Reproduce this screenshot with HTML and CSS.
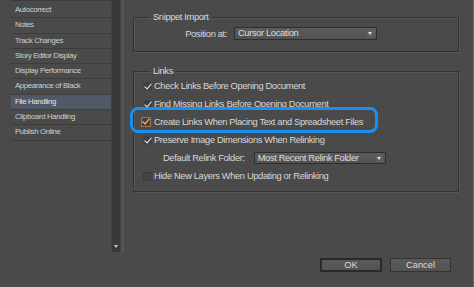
FILE: index.html
```html
<!DOCTYPE html>
<html lang="en">
<head>
  <meta charset="UTF-8">
  <meta name="viewport" content="width=device-width, initial-scale=1.0">
  <title>Preferences - File Handling</title>
  <link rel="stylesheet" href="styles.css">
</head>
<body>
  <div class="dialog">
    <div class="side">
      <ul class="cats">
        <li>Autocorrect</li>
        <li>Notes</li>
        <li>Track Changes</li>
        <li>Story Editor Display</li>
        <li>Display Performance</li>
        <li>Appearance of Black</li>
        <li class="active">File Handling</li>
        <li>Clipboard Handling</li>
        <li>Publish Online</li>
      </ul>
      <div class="scroll"><span class="scroll-arrow"></span></div>
    </div>

    <div class="main">
      <fieldset class="group snippet">
        <legend>Snippet Import</legend>
        <div class="field pos">
          <span class="lbl">Position at:</span>
          <div class="select sel-pos">Cursor Location<span class="arrow"></span></div>
        </div>
      </fieldset>

      <fieldset class="group links">
        <legend>Links</legend>
        <div class="row"><span class="box on"></span>Check Links Before Opening Document</div>
        <div class="row"><span class="box on"></span>Find Missing Links Before Opening Document</div>
        <div class="row callout"><span class="box on focus"></span>Create Links When Placing Text and Spreadsheet Files<span class="ring"></span></div>
        <div class="row"><span class="box on"></span>Preserve Image Dimensions When Relinking</div>
        <div class="row sub">
          <span class="lbl">Default Relink Folder:</span>
          <div class="select sel-folder">Most Recent Relink Folder<span class="arrow"></span></div>
        </div>
        <div class="row"><span class="box"></span>Hide New Layers When Updating or Relinking</div>
      </fieldset>

      <div class="buttons">
        <button class="btn default">OK</button>
        <button class="btn">Cancel</button>
      </div>
    </div>

    <div class="edge"></div>
  </div>
</body>
</html>
```

FILE: styles.css
```css
body {
  margin:0; padding:0;
  background:#4a4a4a; color:#d8d8d8;
  font-family: "Liberation Sans", Arial, sans-serif;
}
.dialog { display:flex; width:474px; height:287px; overflow:hidden; }

/* left category list */
.side {
  width:111px; padding-left:11px;
  height:252px; display:flex;
  border-right:2px solid #575757;
}
.cats {
  list-style:none; margin:0; padding:2px 0 0 0;
  width:100px; border-top:1px solid #3c3c3c;
}
.cats li {
  height:14.3px; line-height:14px;
  padding-left:4px;
  font-size:7.8px; letter-spacing:-0.35px; color:#d0d0d0;
  border-bottom:1px solid #3c3c3c;
  white-space:nowrap;
}
.cats li.active { background:#525966; color:#e4e4e4; }
.scroll {
  width:8px; background:#393939;
  border-left:1px solid #424242;
  display:flex; flex-direction:column; justify-content:flex-end; align-items:center;
}
.scroll-arrow {
  width:0; height:0; margin-bottom:4px;
  border-left:2px solid transparent; border-right:2px solid transparent;
  border-top:3px solid #cfcfcf;
}

/* main panel */
.main {
  flex:1; display:flex; flex-direction:column;
  padding:12px 0 15px 9px;
}
.group {
  margin:0; width:326px; box-sizing:border-box;
  border:1px solid #333;
  box-shadow:1px 1px 0 #565656, inset 1px 1px 0 #565656;
  padding:0 0 0 9px;
  font-size:9.3px; letter-spacing:-0.35px;
}
.group legend {
  padding:0 3px; margin-left:7px;
  line-height:11px; font-size:9.3px; color:#d8d8d8;
}
.snippet { padding-top:4px; padding-bottom:11px; }
.links { margin-top:14px; padding-bottom:6px; }

.field { display:flex; align-items:center; height:13px; }
.pos .lbl { width:84px; text-align:right; margin-right:7px; }

.select {
  position:relative; box-sizing:border-box;
  height:13px; line-height:11px;
  padding-left:3px;
  background:linear-gradient(#5c5c5c, #525252);
  border:1px solid #2e2e2e;
  color:#dedede; font-size:9.3px;
}
.sel-pos { width:143px; }
.sel-folder { width:132px; height:12px; line-height:10px; }
.arrow {
  position:absolute; right:2px; top:2px;
  width:7px; height:7px; background:#606060;
}
.arrow::after {
  content:""; position:absolute; left:1px; top:2px;
  border-left:2.5px solid transparent; border-right:2.5px solid transparent;
  border-top:3px solid #e0e0e0;
}

.row {
  display:flex; align-items:center;
  height:18px; white-space:nowrap;
}
.box {
  width:7px; height:7px; margin-right:2px;
  background:#3e3e3e; border:1px solid #444;
  position:relative; flex:none;
}
.box.on::after {
  content:""; position:absolute; left:2px; top:-1px;
  width:3px; height:6px;
  border-right:1.5px solid #f0f0f0; border-bottom:1.5px solid #f0f0f0;
  transform:rotate(40deg);
}
.box.focus { border-color:#a9744a; background:#4a4038; margin-left:-2px; margin-right:3px; width:8px; height:8px; }
.box.focus::after { border-color:#f3d9bf; }
.box:not(.on) { background:#444; border-color:#3c3c3c; }

.callout { position:relative; }
.ring {
  position:absolute; left:-13px; top:-6px;
  width:242px; height:20px;
  border:3px solid #1a8ff0; border-radius:8px;
}
.sub { padding-left:20px; }
.sub .lbl { margin-right:9px; }

.buttons {
  margin-top:auto; display:flex; justify-content:flex-end;
  gap:8px; padding-right:22px;
}
.btn {
  width:61px; height:14px; padding:0;
  background:linear-gradient(#5a5a5a, #535353);
  border:1px solid #333; color:#dcdcdc;
  font-family: "Liberation Sans", Arial, sans-serif; font-size:9.3px; line-height:12px;
}
.btn.default { width:62px; border:2px solid #2a2a2a; line-height:10px; }

.edge { width:1px; background:#3676ad; }
```
